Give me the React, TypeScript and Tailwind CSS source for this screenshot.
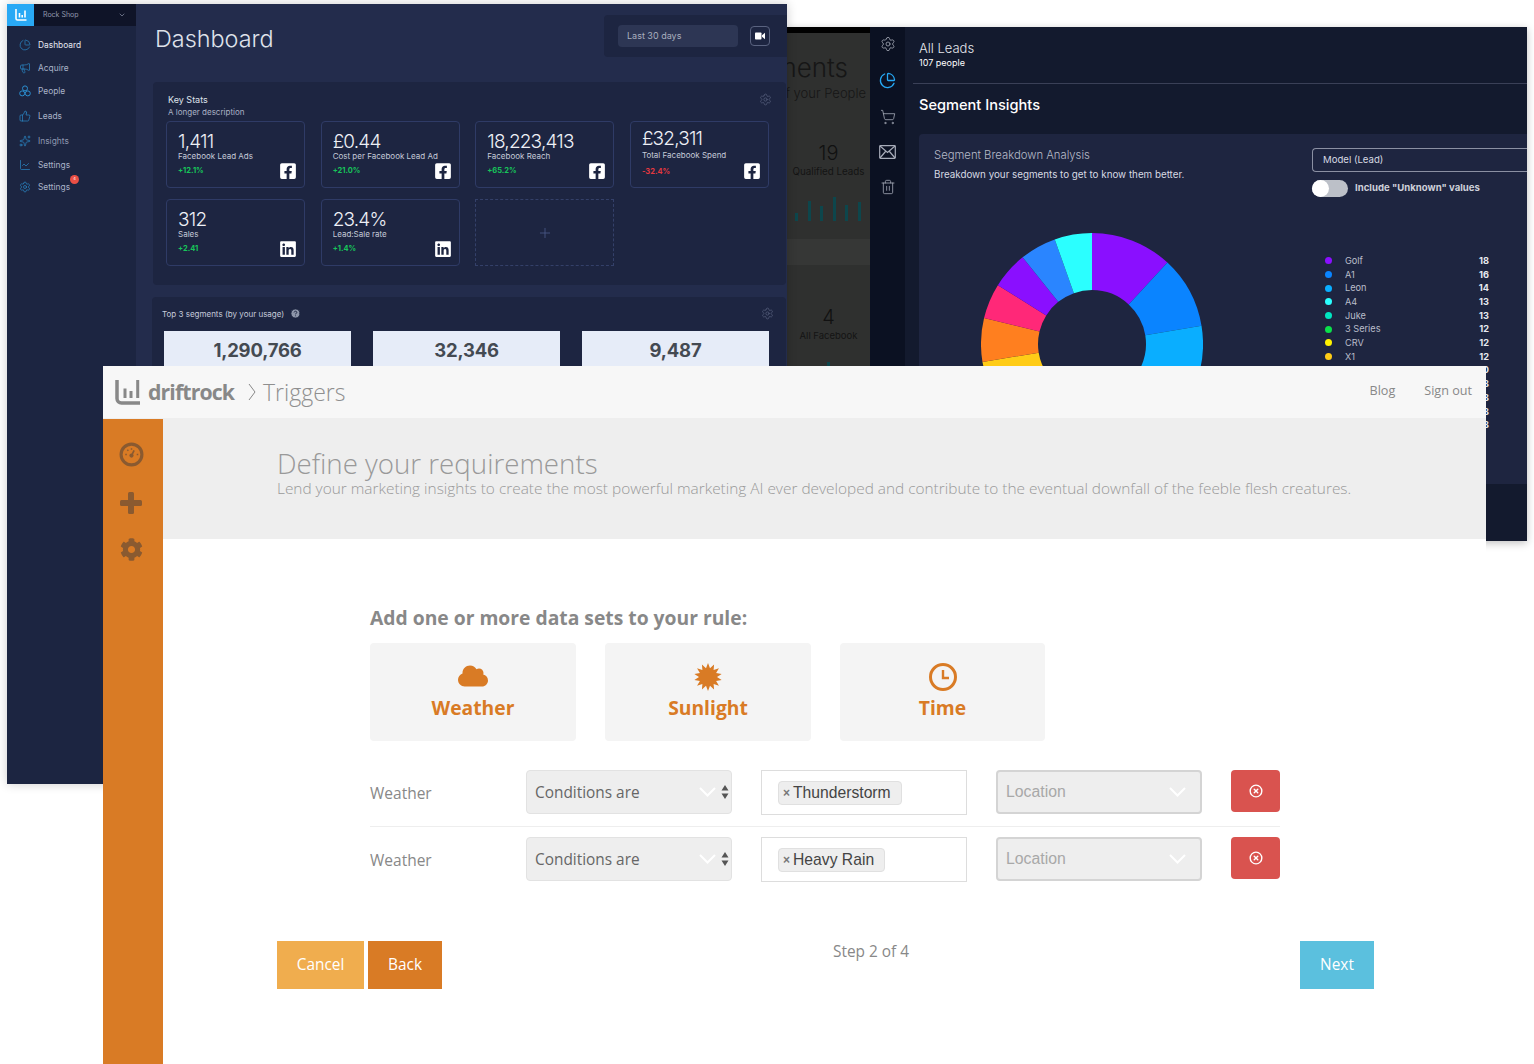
import React from "react";
import { PieChart, Megaphone, ThumbsUp, Settings, ChartLine, ShoppingCart, Trash2, Plus, Sparkles, ChevronDown, CircleHelp, CircleX } from "lucide-react";
import { FaFacebookSquare, FaLinkedin, FaCloud, FaCog } from "react-icons/fa";

const pop = { fontFamily: '"Inter", "Noto Sans", sans-serif' };

function People() {
  return (
    <svg width="12" height="12" viewBox="0 0 12 12" fill="none" stroke="#2b8fd0" strokeWidth="1">
      <circle cx="6" cy="3.4" r="2.5" />
      <circle cx="3.2" cy="8.4" r="2.5" />
      <circle cx="8.8" cy="8.4" r="2.5" />
    </svg>
  );
}

const nav = [
  { label: "Dashboard", Icon: PieChart, cls: "mt-[12px] text-[#e4e7f0]" },
  { label: "Acquire", Icon: Megaphone, cls: "mt-[9px] text-[#aab3c8]" },
  { label: "People", Icon: People, cls: "mt-[9px] text-[#aab3c8]" },
  { label: "Leads", Icon: ThumbsUp, cls: "mt-[11px] text-[#aab3c8]" },
  { label: "Insights", Icon: Sparkles, cls: "mt-[11px] text-[#8f98b0]" },
  { label: "Settings", Icon: ChartLine, cls: "mt-[10px] text-[#aab3c8]" },
  { label: "Settings", Icon: Settings, cls: "mt-[8px] text-[#aab3c8]", badge: true },
];

const stats = [
  { n: "1,411", l: "Facebook Lead Ads", d: "+12.1%", Brand: FaFacebookSquare },
  { n: "£0.44", l: "Cost per Facebook Lead Ad", d: "+21.0%", Brand: FaFacebookSquare },
  { n: "18,223,413", l: "Facebook Reach", d: "+65.2%", Brand: FaFacebookSquare },
  { n: "£32,311", l: "Total Facebook Spend", d: "-32.4%", Brand: FaFacebookSquare, neg: true },
  { n: "312", l: "Sales", d: "+2.41", Brand: FaLinkedin },
  { n: "23.4%", l: "Lead:Sale rate", d: "+1.4%", Brand: FaLinkedin },
];

function StatCard({ s }: { s: (typeof stats)[number] }) {
  return (
    <div className={`h-[67px] rounded-sm border border-[#2f3b66] pl-[11px] pr-[7px] ${s.neg ? "pt-[7px]" : "pt-[10px]"}`}>
      <div className="text-[19px] leading-[20px] font-light tracking-[-0.8px] text-[#eef0f6]">{s.n}</div>
      <div className={`text-[8px] leading-[10px] text-[#c5cad8] ${s.neg ? "mt-px" : "-mt-px"}`}>{s.l}</div>
      <div className={`flex items-center justify-between ${s.neg ? "mt-[4px]" : "mt-[1px]"}`}>
        <span className={`text-[7.5px] font-bold ${s.neg ? "text-[#e2383f]" : "text-[#17c45a]"}`}>{s.d}</span>
        <s.Brand className={`h-[18px] w-[18px] text-white ${s.neg ? "-mt-[2px]" : ""}`} />
      </div>
    </div>
  );
}

function DashboardWindow() {
  return (
    <div className="absolute left-[7px] top-[4px] z-10 flex h-[780px] w-[780px] overflow-hidden shadow-[0_0_10px_rgba(0,0,0,0.2)]" style={pop}>
      <aside className="flex w-[129px] shrink-0 flex-col bg-[#1c2541]">
        <div className="flex h-[22px] items-stretch">
          <div className="flex w-[27px] items-center justify-center bg-[#29a9f5]">
            <svg width="12" height="12" viewBox="0 0 12 12" fill="none" stroke="white" strokeWidth="1.6">
              <path d="M1 0v9.5a1.5 1.5 0 0 0 1.5 1.5H11.5M4.500 4v4.500M7.200 6v2.500M10 1.500v7" />
            </svg>
          </div>
          <div className="flex flex-1 items-center justify-between bg-[#0f1428] pl-[9px] pr-[10px] text-[7px] text-[#8f98ad]">
            <span>Rock Shop</span>
            <ChevronDown size={8} strokeWidth={2} />
          </div>
        </div>
        {nav.map((n, i) => (
          <div key={i} className={`flex h-[14px] items-center pl-[12px] text-[8.4px] ${n.cls}`}>
            <n.Icon size={12} strokeWidth={1.3} color="#2b8fd0" />
            <span className="relative ml-[7px]">
              {n.label}
              {n.badge && <span className="absolute -right-[9px] -top-[6px] flex h-[9px] w-[9px] items-center justify-center rounded-full bg-[#ea4f45] text-[4px] text-white">4</span>}
            </span>
          </div>
        ))}
      </aside>
      <main className="flex flex-1 flex-col bg-[#232c4c]">
        <div className="flex h-[78px] items-start justify-between pl-[19px]">
          <h1 className="mt-[18px] text-[23.4px] leading-[34px] font-light text-[#dfe2ea]">Dashboard</h1>
          <div className="mt-[11px] flex h-[42px] w-[183px] items-center rounded-l bg-[#1d2541] pl-[14px] pr-[17px]">
            <div className="flex h-[22px] w-[120px] items-center rounded-sm bg-[#2d3654] pl-[9px] text-[9px] text-[#a9afbf]">Last 30 days</div>
            <div className="ml-[12px] flex h-[20px] w-[20px] items-center justify-center rounded-sm border border-[#5a6380]">
              <svg width="10" height="8" viewBox="0 0 10 8" fill="white">
                <rect x="0" y="0.5" width="6.5" height="7" rx="0.8" />
                <path d="M7 3.200L10 0.800v6.400L7 4.800z" />
              </svg>
            </div>
          </div>
        </div>
        <section className="ml-[17px] mr-px h-[203px] rounded bg-[#1d2541] pl-[13px] pr-[14px] pt-[11px]">
          <div className="flex items-start justify-between pl-[2px]">
            <div>
              <div className="text-[9px] leading-[13px] text-[#dfe2ea]">Key Stats</div>
              <div className="text-[8px] leading-[13px] text-[#aab1c4]">A longer description</div>
            </div>
            <Settings size={13} strokeWidth={1.2} color="#5c6684" />
          </div>
          <div className="mt-[2px] grid w-[603px] grid-cols-4 gap-x-[15.5px] gap-y-[11px]">
            {stats.map((s) => (
              <StatCard key={s.l} s={s} />
            ))}
            <div className="flex h-[67px] items-center justify-center border border-dashed border-[#344069]">
              <Plus size={16} strokeWidth={1.2} color="#4b5a8c" />
            </div>
          </div>
        </section>
        <section className="ml-[16px] mr-px mt-[12px] flex-1 rounded bg-[#1d2541] pl-[12px] pr-[12px] pt-[10px]">
          <div className="flex items-center justify-between">
            <div className="-ml-[2px] flex items-center gap-[6px] text-[8px] leading-[12px] text-[#c6cbda]">
              Top 3 segments (by your usage)
              <CircleHelp size={11} color="#1d2541" fill="#8e96aa" />
            </div>
            <Settings size={13} strokeWidth={1.2} color="#5c6684" />
          </div>
          <div className="mt-[11px] grid w-[605px] grid-cols-3 gap-x-[22px]">
            {["1,290,766", "32,346", "9,487"].map((v) => (
              <div key={v} className="h-[60px] bg-[#e6ecf8] pt-[6px] text-center text-[18.5px] font-bold leading-[26px] tracking-[-0.2px] text-[#444a52]">{v}</div>
            ))}
          </div>
        </section>
      </main>
    </div>
  );
}

const slices = [
  ["#8a0fff", 0, 42.8],
  ["#0a84ff", 42.8, 80.6],
  ["#0aaeff", 80.6, 114],
  ["#2bffff", 114, 145],
  ["#00e5c0", 145, 176],
  ["#0be04a", 176, 205],
  ["#fff200", 205, 235],
  ["#ffcc17", 235, 260.7],
  ["#ff7f1f", 260.7, 283.5],
  ["#ff2878", 283.5, 302],
  ["#8a0fff", 302, 321.3],
  ["#2a85ff", 321.3, 340.4],
  ["#2bffff", 340.4, 360],
] as const;

function sector(a: number, b: number) {
  const p = (r: number, d: number) => {
    const t = ((d - 90) * Math.PI) / 180;
    return `${(111 + r * Math.cos(t)).toFixed(2)} ${(111 + r * Math.sin(t)).toFixed(2)}`;
  };
  return `M${p(111, a)}A111 111 0 0 1 ${p(111, b)}L${p(54, b)}A54 54 0 0 0 ${p(54, a)}Z`;
}

const legend = [
  ["Golf", "18", "#8a0fff"],
  ["A1", "16", "#0a84ff"],
  ["Leon", "14", "#0aaeff"],
  ["A4", "13", "#2bffff"],
  ["Juke", "13", "#00e5c0"],
  ["3 Series", "12", "#0be04a"],
  ["CRV", "12", "#fff200"],
  ["X1", "12", "#ffcc17"],
  ["Polo", "10", "#ff7f1f"],
  ["Astra", "8", "#ff2878"],
  ["Focus", "8", "#8a0fff"],
  ["Civic", "8", "#2a85ff"],
  ["Golf R", "8", "#2bffff"],
];

function MailCross() {
  return (
    <svg width="17" height="14" viewBox="0 0 17 14" fill="none" stroke="currentColor" strokeWidth="1.2">
      <rect x="0.7" y="0.7" width="15.6" height="12.6" rx="0.8" />
      <path d="M1 1l7.500 6.500L16 1M1 13l5.500-6.500M16 13l-5.500-6.500" />
    </svg>
  );
}

function InsightsWindow() {
  return (
    <div className="absolute left-[787px] top-[27px] flex h-[514px] w-[740px] overflow-hidden shadow-[0_2px_8px_rgba(0,0,0,0.25)]" style={pop}>
      <div className="flex w-[83px] shrink-0 flex-col overflow-hidden bg-[#2f302f]">
        <div className="h-[6px] bg-black" />
        <div className="mt-[19px] flex justify-end whitespace-nowrap pr-[22px] text-[26px] font-light leading-[32px] text-[#161616]">Segments</div>
        <div className="flex justify-end whitespace-nowrap pr-[4px] text-[13px] font-light leading-[18px] text-[#161616]">Insights of your People</div>
        <div className="mt-[39px] text-center text-[20px] font-light leading-[24px] text-[#111]">19</div>
        <div className="whitespace-nowrap text-center text-[9.8px] leading-[14px] text-[#141414]">Qualified Leads</div>
        <div className="mt-[17px] flex h-[25px] items-end gap-[9.5px] pl-[8px]">
          <div className="h-[8px] w-[3px] bg-[#0d464c]" />
          <div className="h-[20px] w-[3px] bg-[#0d464c]" />
          <div className="h-[15px] w-[3px] bg-[#0d464c]" />
          <div className="h-[24px] w-[3px] bg-[#0d464c]" />
          <div className="h-[16px] w-[3px] bg-[#0d464c]" />
          <div className="h-[19px] w-[3px] bg-[#0d464c]" />
        </div>
        <div className="mt-[18px] h-[26px] bg-[#363736]" />
        <div className="mt-[40px] text-center text-[20px] font-light leading-[24px] text-[#111]">4</div>
        <div className="whitespace-nowrap text-center text-[9.5px] leading-[14px] text-[#141414]">All Facebook</div>
        <div className="ml-[40px] mt-[19px] h-[8px] w-[3px] bg-[#0d464c]" />
      </div>
      <div className="flex w-[35px] shrink-0 flex-col items-center gap-[20px] bg-[#0b1122] pt-[9px] text-[#a7acb9]">
        <Settings size={16} strokeWidth={1.2} />
        <PieChart size={17} strokeWidth={1.8} color="#26a8f4" />
        <ShoppingCart size={16} strokeWidth={1.2} />
        <MailCross />
        <Trash2 size={16} strokeWidth={1.2} />
      </div>
      <div className="flex flex-1 flex-col bg-[#131a2e] pl-[8px]">
        <div className="h-[57px] border-b border-[#3a4057] pl-[6px] pt-[12px] text-white">
          <div className="text-[13px] leading-[18px] font-light text-[#e5e7ec]">All Leads</div>
          <div className="text-[9px] leading-[12px]">107 people</div>
        </div>
        <div className="flex h-[50px] items-start pl-[6px] pt-[11px] text-[14.6px] leading-[20px] font-medium text-white">Segment Insights</div>
        <div className="ml-[6px] flex h-[350px] overflow-hidden rounded-tl bg-[#1e2540] text-[#d7dae3]">
          <div className="w-[393px] shrink-0 pl-[15px] pt-[13px]">
            <div className="text-[11.3px] font-light leading-[16px] text-[#b6bac7]">Segment Breakdown Analysis</div>
            <div className="mt-[5px] text-[9.8px] leading-[14px]">Breakdown your segments to get to know them better.</div>
            <svg className="ml-[47px] mt-[51px]" width="222" height="222" viewBox="0 0 222 222">
              {slices.map(([c, a, b]) => (
                <path key={a} d={sector(a, b)} fill={c} />
              ))}
            </svg>
          </div>
          <div className="flex-1 pt-[14px]">
            <div className="flex h-[24px] items-center rounded-l-sm border border-r-0 border-[#8b90a3] pl-[10px] text-[9.6px]">Model (Lead)</div>
            <div className="mt-[8px] flex items-center">
              <div className="flex h-[17px] w-[36px] items-center rounded-full bg-[#bcc0c8]">
                <div className="h-[17px] w-[17px] rounded-full bg-white" />
              </div>
              <span className="ml-[7px] text-[9.6px] font-bold text-[#cdd0da]">Include "Unknown" values</span>
            </div>
            <div className="ml-[13px] mt-[57px] w-[164px]">
              {legend.map(([n, v, c]) => (
                <div key={n} className="flex h-[13.7px] items-center text-[9.2px] text-[#b9bdca]">
                  <span className="h-[7px] w-[7px] rounded-full" style={{ background: c }} />
                  <span className="ml-[13px] flex-1">{n}</span>
                  <span className="font-bold text-[#e8eaf0]">{v}</span>
                </div>
              ))}
            </div>
          </div>
        </div>
      </div>
    </div>
  );
}

function Sun() {
  const pts: string[] = [];
  for (let i = 0; i < 28; i++) {
    const r = i % 2 ? 9 : 14;
    const t = (i * Math.PI) / 14;
    pts.push(`${(14 + r * Math.sin(t)).toFixed(2)},${(14 - r * Math.cos(t)).toFixed(2)}`);
  }
  return (
    <svg width="28" height="28" viewBox="0 0 28 28">
      <polygon points={pts.join(" ")} fill="#d97b25" />
    </svg>
  );
}

function ClockIcon() {
  return (
    <svg width="28" height="28" viewBox="0 0 28 28" fill="none" stroke="#d97b25" strokeWidth="3">
      <circle cx="14" cy="14" r="12.5" />
      <path d="M14 7v8h6" strokeWidth="2.4" />
    </svg>
  );
}

function Gauge() {
  return (
    <svg width="25" height="25" viewBox="0 0 24 24" fill="none" stroke="#8a5a30">
      <circle cx="12" cy="12" r="10" strokeWidth="3" />
      <circle cx="12" cy="13" r="2" fill="#8a5a30" stroke="none" />
      <path d="M12 13l2.500-5" strokeWidth="1.6" />
      <path d="M6 12h1.500M8 7.500l1 1M12 6v1.500M17 12h1.500" strokeWidth="1.4" />
    </svg>
  );
}

function PlusBold() {
  return (
    <svg width="22" height="22" viewBox="0 0 22 22" fill="#8a5a30">
      <rect x="8" y="0" width="6" height="22" rx="1.5" />
      <rect x="0" y="8" width="22" height="6" rx="1.5" />
    </svg>
  );
}

function Logo() {
  return (
    <svg width="25" height="25" viewBox="0 0 25 25" fill="none" stroke="#888" strokeWidth="3.5">
      <path d="M2 0v18.500a4.500 4.500 0 0 0 4.500 4.500H25" />
      <path d="M10 8.500v9.500M16 11v7M22.700 0v18" strokeWidth="3" />
    </svg>
  );
}

function Chevron() {
  return (
    <svg width="17" height="10" viewBox="0 0 17 10" fill="none" stroke="white" strokeWidth="2">
      <path d="M1 1l7.500 7.500L16 1" />
    </svg>
  );
}

function Row({ tag, border }: { tag: string; border?: boolean }) {
  const sans = { fontFamily: '"Liberation Sans", sans-serif' };
  return (
    <div className={`flex items-start gap-[29px] ${border ? "h-[57px] border-b border-[#eeeeee]" : "mt-[10px] h-[45px]"}`}>
      <div className="flex h-[47px] w-[127px] items-center text-[15.5px] text-[#888]">Weather</div>
      <div className="flex h-[44px] w-[206px] items-center justify-between rounded border border-[#e2e2e2] bg-[#eeeeee] pl-[8px] pr-[2px] text-[15.4px] text-[#666]">
        <span className="pt-[2px]">Conditions are</span>
        <span className="flex items-center gap-[5px]">
          <Chevron />
          <svg width="8" height="14" viewBox="0 0 8 14" fill="#555">
            <path d="M4 0l3.500 5.500h-7zM4 14L.5 8.500h7z" />
          </svg>
        </span>
      </div>
      <div className="flex h-[45px] w-[206px] items-center border border-[#dddddd] pl-[16px]" style={sans}>
        <span className="flex h-[24px] items-center rounded-sm border border-[#e0e0e0] bg-[#eeeeee] pl-[4px] pr-[10px] text-[15.7px] text-[#444]">
          <span className="mr-[3px] text-[12px] font-bold text-[#777]">×</span>
          {tag}
        </span>
      </div>
      <div className="flex h-[44px] w-[206px] items-center justify-between rounded-sm border-2 border-[#d4d4d4] bg-[#eeeeee] pl-[8px] pr-[14px] text-[15.8px] text-[#a8a8a8]" style={sans}>
        <span>Location</span>
        <Chevron />
      </div>
      <div className="flex h-[42px] w-[49px] items-center justify-center rounded-sm bg-[#d9534f]">
        <CircleX size={14} strokeWidth={2.4} color="white" />
      </div>
    </div>
  );
}

function TriggersWindow() {
  return (
    <div className="absolute left-[103px] top-[366px] z-20 flex h-[698px] w-[1383px] flex-col bg-white" style={{ fontFamily: '"Open Sans", sans-serif' }}>
      <header className="flex h-[53px] shrink-0 items-center border-b border-[#eeeeee] bg-[#f7f7f7] pl-[12px] pr-[14px]">
        <Logo />
        <span className="ml-[8px] text-[21.3px] font-bold tracking-[-0.9px] text-[#888]">driftrock</span>
        <svg className="ml-[14px]" width="8" height="20" viewBox="0 0 8 20" fill="none" stroke="#888" strokeWidth="1">
          <path d="M1 2l6 8-6 8" />
        </svg>
        <span className="ml-[7px] text-[23px] font-light text-[#8f8f8f]">Triggers</span>
        <nav className="ml-auto flex gap-[29px] pb-[2px] text-[12.6px] text-[#888]">
          <span>Blog</span>
          <span>Sign out</span>
        </nav>
      </header>
      <div className="flex flex-1">
        <aside className="flex w-[60px] shrink-0 flex-col items-center bg-[#d97b25] pr-[4px] pt-[23px]">
          <Gauge />
          <div className="mt-[25px]"><PlusBold /></div>
          <FaCog className="mt-[24px] h-[23px] w-[23px] text-[#8a5a30]" />
        </aside>
        <div className="flex-1">
          <div className="h-[120px] bg-[#eeeeee] pl-[114px] pt-[28px] text-[#999]">
            <h1 className="text-[27.7px] font-light leading-[32px]">Define your requirements</h1>
            <p className="text-[15.4px] font-light leading-[20px]">Lend your marketing insights to create the most powerful marketing AI ever developed and contribute to the eventual downfall of the feeble flesh creatures.</p>
          </div>
          <div className="pl-[207px] pt-[65px]">
            <h2 className="text-[19.3px] font-bold leading-[28px] text-[#888]">Add one or more data sets to your rule:</h2>
            <div className="mt-[11px] flex gap-[29px]">
              <div className="flex h-[98px] w-[206px] flex-col items-center rounded-sm bg-[#f4f4f4] pt-[20px] text-[19.3px] font-bold text-[#d97b25]">
                <div className="flex h-[28px] items-start"><FaCloud className="h-[26px] w-[30px]" /></div>
                <span className="mt-[3px] leading-[28px]">Weather</span>
              </div>
              <div className="flex h-[98px] w-[206px] flex-col items-center rounded-sm bg-[#f4f4f4] pt-[20px] text-[19.3px] font-bold text-[#d97b25]">
                <Sun />
                <span className="mt-[3px] leading-[28px]">Sunlight</span>
              </div>
              <div className="flex h-[98px] w-[205px] flex-col items-center rounded-sm bg-[#f4f4f4] pt-[20px] text-[19.3px] font-bold text-[#d97b25]">
                <ClockIcon />
                <span className="mt-[3px] leading-[28px]">Time</span>
              </div>
            </div>
            <div className="mt-[29px] w-[910px]">
              <Row tag="Thunderstorm" border />
              <Row tag="Heavy Rain" />
            </div>
          </div>
          <div className="ml-[114px] mt-[59px] flex w-[1097px] items-start text-[15.4px] text-white">
            <div className="flex h-[48px] w-[87px] items-center justify-center bg-[#f0ad4e]">Cancel</div>
            <div className="ml-[4px] flex h-[48px] w-[74px] items-center justify-center bg-[#d97b25]">Back</div>
            <div className="ml-[391px] leading-[22px] text-[#888]">Step 2 of 4</div>
            <div className="ml-auto flex h-[48px] w-[74px] items-center justify-center bg-[#5bc0de]">Next</div>
          </div>
        </div>
      </div>
    </div>
  );
}

export default function App() {
  return (
    <div className="relative h-[1064px] w-[1534px] overflow-hidden bg-white">
      <InsightsWindow />
      <DashboardWindow />
      <TriggersWindow />
    </div>
  );
}
